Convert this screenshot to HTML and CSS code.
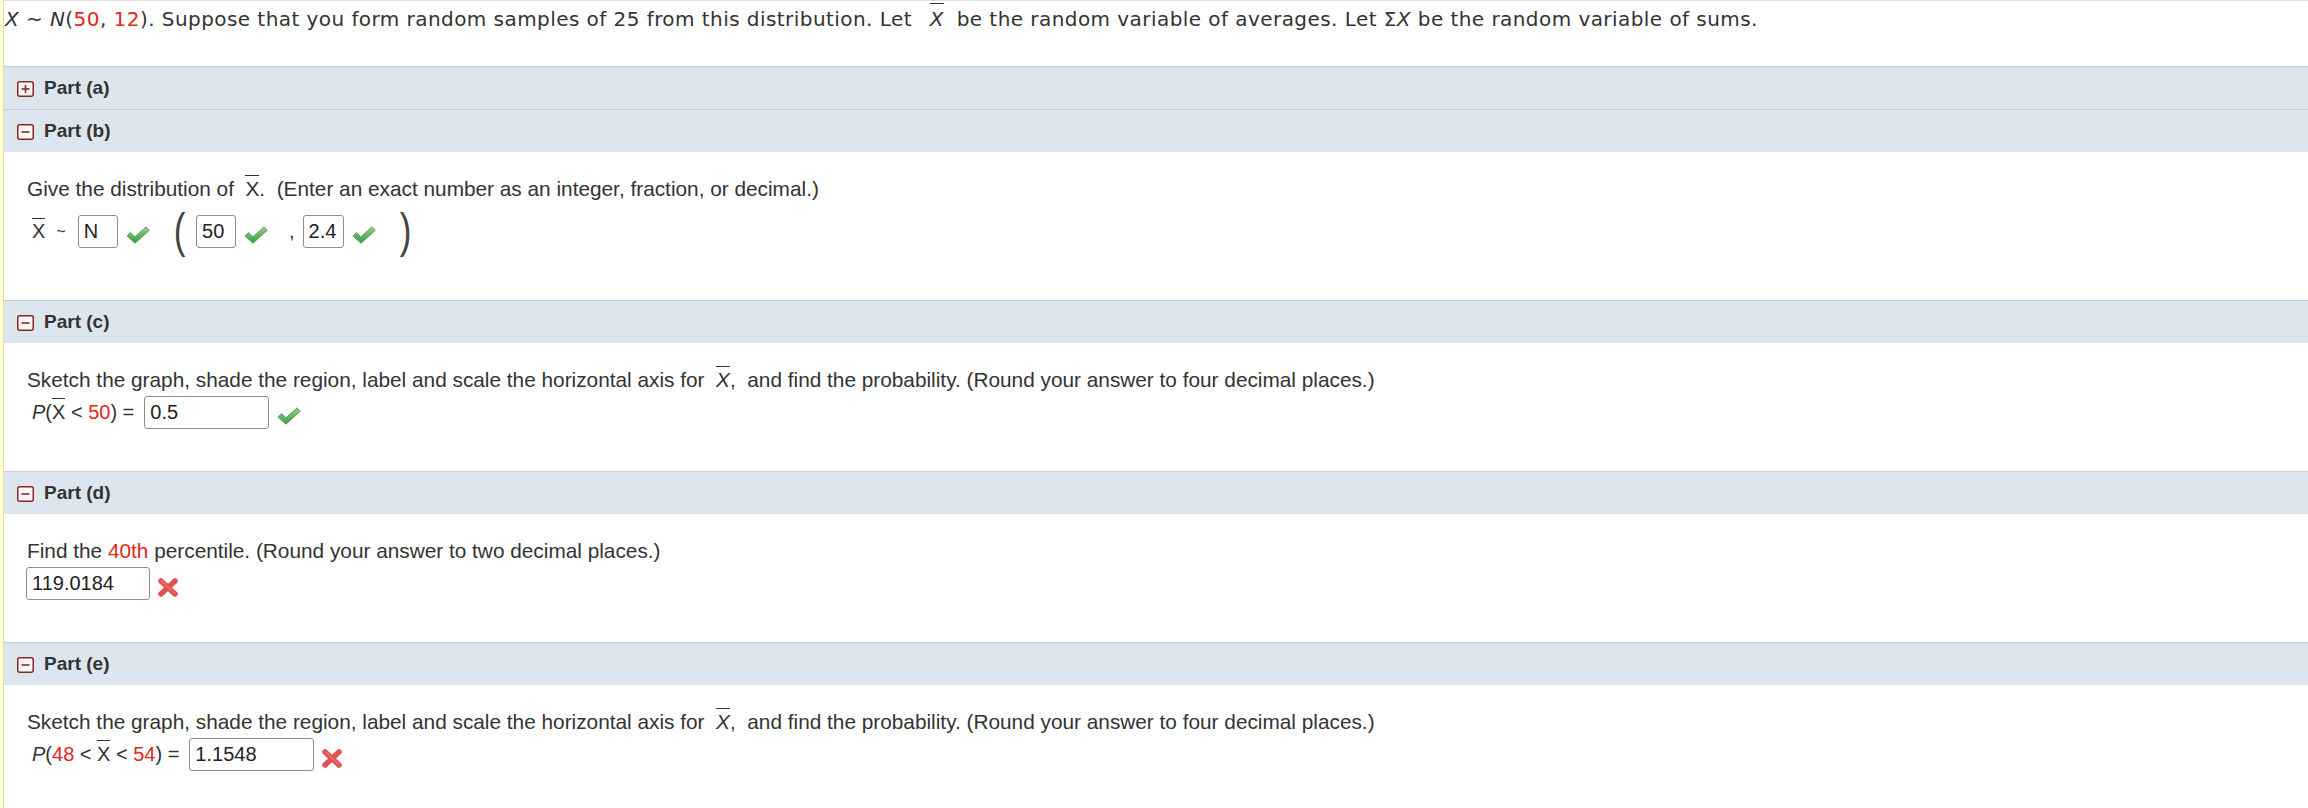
FILE: index.html
```html
<!DOCTYPE html>
<html>
<head>
<meta charset="utf-8">
<link rel="stylesheet" href="styles.css">
</head>
<body>
<div class="page">
<div class="sheet">
  <div class="intro"><i>X</i> ~ <i>N</i>(<span class="red">50</span>, <span class="red">12</span>). Suppose that you form random samples of 25 from this distribution. Let <span class="xbar xbar-intro"><i>X</i></span> be the random variable of averages. Let Σ<i>X</i> be the random variable of sums.</div>

  <div class="phead">
    <svg class="picon" width="17" height="16" viewBox="0 0 17 16"><rect x="0.75" y="0.75" width="15.5" height="14.5" rx="2" fill="#f7f7f7" stroke="#8e2626" stroke-width="1.5"/><line x1="4.5" y1="8" x2="12.5" y2="8" stroke="#8e2626" stroke-width="1.6"/><line x1="8.5" y1="4" x2="8.5" y2="12" stroke="#8e2626" stroke-width="1.6"/></svg>
    <span>Part (a)</span>
  </div>

  <div class="phead">
    <svg class="picon" width="17" height="16" viewBox="0 0 17 16"><rect x="0.75" y="0.75" width="15.5" height="14.5" rx="2" fill="#f7f7f7" stroke="#8e2626" stroke-width="1.5"/><line x1="4.5" y1="8" x2="12.5" y2="8" stroke="#8e2626" stroke-width="1.6"/></svg>
    <span>Part (b)</span>
  </div>
  <div class="pbody pbody-b">
    <p>Give the distribution of&nbsp; <span class="xbar">X</span>.&nbsp; (Enter an exact number as an integer, fraction, or decimal.)</p>
    <div class="row row-b">
      <span class="txt lead"><span class="xbar xbar-low">X</span></span>
      <span class="txt tilde">~</span>
      <span class="box w40">N</span>
      <svg class="check" width="24" height="18" viewBox="0 0 24 18"><defs><linearGradient id="g1" x1="0" y1="0" x2="0" y2="1"><stop offset="0" stop-color="#92d38f"/><stop offset="1" stop-color="#3f9a3f"/></linearGradient></defs><path d="M1 10 L4.5 6.5 L9 10.8 L20 0.8 L23.2 4.4 L9 17.2 Z" fill="url(#g1)" stroke="#3c8c3c" stroke-width="0.7" stroke-linejoin="round"/></svg>
      <span class="paren paren-l">(</span>
      <span class="box w40 m12">50</span>
      <svg class="check" width="24" height="18" viewBox="0 0 24 18"><path d="M1 10 L4.5 6.5 L9 10.8 L20 0.8 L23.2 4.4 L9 17.2 Z" fill="url(#g1)" stroke="#3c8c3c" stroke-width="0.7" stroke-linejoin="round"/></svg>
      <span class="txt comma">,</span>
      <span class="box w41 m8">2.4</span>
      <svg class="check" width="24" height="18" viewBox="0 0 24 18"><path d="M1 10 L4.5 6.5 L9 10.8 L20 0.8 L23.2 4.4 L9 17.2 Z" fill="url(#g1)" stroke="#3c8c3c" stroke-width="0.7" stroke-linejoin="round"/></svg>
      <span class="paren paren-r">)</span>
    </div>
  </div>

  <div class="phead">
    <svg class="picon" width="17" height="16" viewBox="0 0 17 16"><rect x="0.75" y="0.75" width="15.5" height="14.5" rx="2" fill="#f7f7f7" stroke="#8e2626" stroke-width="1.5"/><line x1="4.5" y1="8" x2="12.5" y2="8" stroke="#8e2626" stroke-width="1.6"/></svg>
    <span>Part (c)</span>
  </div>
  <div class="pbody">
    <p>Sketch the graph, shade the region, label and scale the horizontal axis for &nbsp;<span class="xbar"><i>X</i></span>, &nbsp;and find the probability. (Round your answer to four decimal places.)</p>
    <div class="row">
      <span class="txt lead"><i>P</i>(<span class="xbar">X</span> &lt; <span class="red">50</span>) =</span>
      <span class="box w125 mc">0.5</span>
      <svg class="check" width="24" height="18" viewBox="0 0 24 18"><path d="M1 10 L4.5 6.5 L9 10.8 L20 0.8 L23.2 4.4 L9 17.2 Z" fill="url(#g1)" stroke="#3c8c3c" stroke-width="0.7" stroke-linejoin="round"/></svg>
    </div>
  </div>

  <div class="phead">
    <svg class="picon" width="17" height="16" viewBox="0 0 17 16"><rect x="0.75" y="0.75" width="15.5" height="14.5" rx="2" fill="#f7f7f7" stroke="#8e2626" stroke-width="1.5"/><line x1="4.5" y1="8" x2="12.5" y2="8" stroke="#8e2626" stroke-width="1.6"/></svg>
    <span>Part (d)</span>
  </div>
  <div class="pbody">
    <p>Find the <span class="red">40th</span> percentile. (Round your answer to two decimal places.)</p>
    <div class="row">
      <span class="box w124 md">119.0184</span>
      <svg class="cross" width="22" height="21" viewBox="0 0 22 21"><line x1="4" y1="4" x2="18" y2="17" stroke="#e0524f" stroke-width="5.5" stroke-linecap="round"/><line x1="18" y1="4" x2="4" y2="17" stroke="#e0524f" stroke-width="5.5" stroke-linecap="round"/><line x1="4.5" y1="4" x2="17.5" y2="16" stroke="#f08a88" stroke-width="1.5" stroke-linecap="round" opacity="0.6"/></svg>
    </div>
  </div>

  <div class="phead">
    <svg class="picon" width="17" height="16" viewBox="0 0 17 16"><rect x="0.75" y="0.75" width="15.5" height="14.5" rx="2" fill="#f7f7f7" stroke="#8e2626" stroke-width="1.5"/><line x1="4.5" y1="8" x2="12.5" y2="8" stroke="#8e2626" stroke-width="1.6"/></svg>
    <span>Part (e)</span>
  </div>
  <div class="pbody">
    <p>Sketch the graph, shade the region, label and scale the horizontal axis for &nbsp;<span class="xbar"><i>X</i></span>, &nbsp;and find the probability. (Round your answer to four decimal places.)</p>
    <div class="row">
      <span class="txt lead"><i>P</i>(<span class="red">48</span> &lt; <span class="xbar">X</span> &lt; <span class="red">54</span>) =</span>
      <span class="box w125 mc">1.1548</span>
      <svg class="cross" width="22" height="21" viewBox="0 0 22 21"><line x1="4" y1="4" x2="18" y2="17" stroke="#e0524f" stroke-width="5.5" stroke-linecap="round"/><line x1="18" y1="4" x2="4" y2="17" stroke="#e0524f" stroke-width="5.5" stroke-linecap="round"/><line x1="4.5" y1="4" x2="17.5" y2="16" stroke="#f08a88" stroke-width="1.5" stroke-linecap="round" opacity="0.6"/></svg>
    </div>
  </div>
</div>
</div>
</body>
</html>
```

FILE: styles.css
```css
html, body {
  margin: 0;
  padding: 0;
  background: #ffffff;
}
body {
  font-family: "Liberation Sans", Arial, sans-serif;
  color: #333333;
  font-size: 20px;
}
.page {
  border-left: 3px solid #ffffd2;
  min-height: 808px;
}
.sheet {
  border-left: 1px solid #e0ddb0;
  border-top: 1px solid #dddddd;
  min-height: 807px;
}
.red { color: #e3261d; }

.intro {
  box-sizing: border-box;
  height: 65px;
  padding: 6px 0 0 1px;
  font-family: "DejaVu Sans", Verdana, sans-serif;
  font-size: 20px;
  letter-spacing: 0.44px;
  line-height: 24px;
  color: #333333;
  white-space: nowrap;
}

.xbar {
  display: inline-block;
  line-height: 1;
  padding-top: 3px;
  margin-top: -8px;
  border-top: 1.5px solid #333333;
}
.xbar-intro {
  padding-top: 5px;
  margin: -8px 6px 0 11px;
}
.xbar-low { padding-top: 2px; }

.phead {
  box-sizing: border-box;
  height: 43px;
  border-top: 1px solid #c8cbcf;
  background: #dce6ef;
  display: flex;
  align-items: center;
  padding-left: 13px;
  gap: 10px;
  font-weight: bold;
  font-size: 19px;
  color: #333333;
}
.picon { display: block; margin-top: 2px; }

.pbody {
  padding: 25px 0 42px 23px;
}
.pbody-b { padding-bottom: 45px; }
.pbody p {
  margin: 0;
  font-size: 20.8px;
  line-height: 23px;
  white-space: nowrap;
}

.row {
  margin-top: 5px;
  height: 33px;
  display: flex;
  align-items: center;
}
.row-b {
  margin-top: 8px;
  height: 47px;
}
.txt {
  line-height: 33px;
  font-size: 20px;
  white-space: nowrap;
}
.lead { margin-left: 5px; }
.tilde { margin: 0 12px 0 11px; font-size: 16px; }
.comma { margin-left: 21px; }

.box {
  box-sizing: border-box;
  height: 33px;
  border: 1px solid #8e8e8e;
  border-radius: 3px;
  padding-left: 5px;
  line-height: 31px;
  font-size: 20px;
  color: #222222;
  background: #ffffff;
}
.w40 { width: 40px; }
.w41 { width: 41px; }
.w124 { width: 124px; }
.w125 { width: 125px; }
.m12 { margin-left: 12px; }
.m8 { margin-left: 8px; }
.mc { margin-left: 10px; }
.md { margin-left: -1px; }

.check {
  display: block;
  margin-left: 8px;
  margin-top: 7px;
}
.cross {
  display: block;
  margin-left: 7px;
  margin-top: 7px;
}

.paren {
  display: block;
  font-size: 28px;
  line-height: 1;
  color: #444444;
  transform: scale(1.25, 1.7);
}
.paren-l { margin-left: 25px; }
.paren-r { margin-left: 25px; }
```
